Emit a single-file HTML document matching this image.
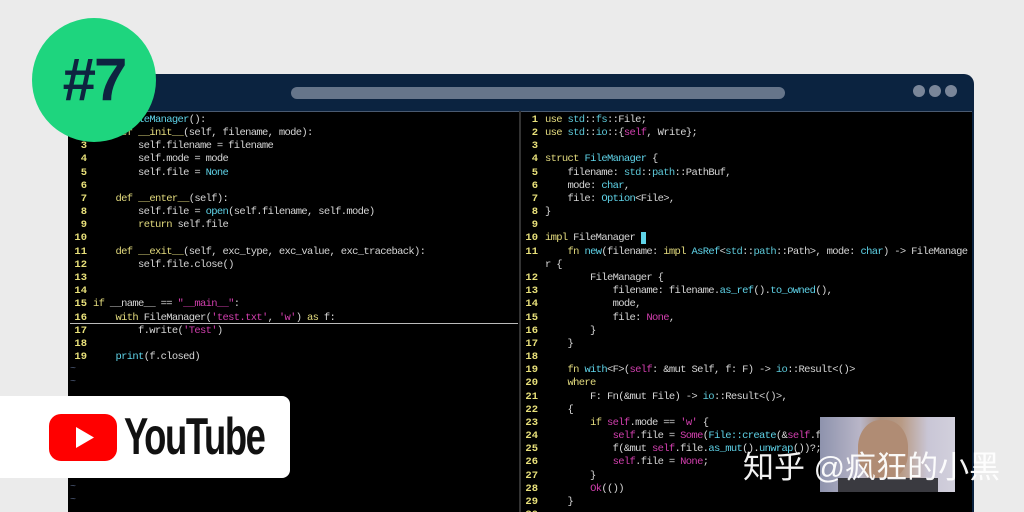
<!DOCTYPE html>
<html style="overflow:hidden"><head><meta charset="utf-8"><style>
html,body{overflow:hidden}
body{margin:0;width:1024px;height:512px;background:#ebebeb;position:relative;overflow:hidden;font-family:"Liberation Sans",sans-serif}
.win{position:absolute;left:68px;top:74px;width:906px;height:438px;background:#0b2340;border-radius:4px 10px 0 0}
.code{position:absolute;top:111px;height:401px;background:#000;border-top:1px solid #4a5a70}
.l{position:absolute;white-space:pre;font-family:"Liberation Mono",monospace;font-size:10.5px;letter-spacing:-0.67px;color:#d6d6d6;line-height:13px;margin-top:2px}
.n{position:absolute;white-space:pre;font-family:"Liberation Mono",monospace;font-size:10.5px;color:#e8e07a;text-align:right;width:30px;line-height:13px;font-weight:bold;margin-top:2px}
.k{color:#e3db7e}.c{color:#5fd3e8}.s{color:#d23fae}.m{color:#d23fae}.t{color:#5cc8d8}
.tl{position:absolute;font-family:"Liberation Mono",monospace;font-size:10px;color:#4c5a78}
</style></head><body>
<div class="win"></div>
<div style="position:absolute;left:291px;top:87px;width:494px;height:12px;border-radius:6px;background:#66758a"></div>
<div style="position:absolute;left:913px;top:85px;width:12px;height:12px;border-radius:6px;background:#7a8699"></div>
<div style="position:absolute;left:929px;top:85px;width:12px;height:12px;border-radius:6px;background:#7a8699"></div>
<div style="position:absolute;left:945px;top:85px;width:12px;height:12px;border-radius:6px;background:#7a8699"></div>
<div class="code" style="left:68px;width:451px"></div>
<div class="code" style="left:521px;width:451px"></div>
<div style="position:absolute;left:519px;top:111px;width:2px;height:401px;background:#333"></div>
<div style="position:absolute;left:70px;top:323px;width:448px;height:1px;background:#bbb"></div>

<!-- left -->
<div class="n" style="left:57px;top:112px">1</div><div class="l" style="left:93px;top:112px"><span class="k">class</span> <span class="c">FileManager</span>():</div>
<div class="n" style="left:57px;top:125px">2</div><div class="l" style="left:93px;top:125px">    <span class="k">def</span> <span class="k">__init__</span>(self, filename, mode):</div>
<div class="n" style="left:57px;top:138px">3</div><div class="l" style="left:93px;top:138px">        self.filename = filename</div>
<div class="n" style="left:57px;top:151px">4</div><div class="l" style="left:93px;top:151px">        self.mode = mode</div>
<div class="n" style="left:57px;top:165px">5</div><div class="l" style="left:93px;top:165px">        self.file = <span class="c">None</span></div>
<div class="n" style="left:57px;top:178px">6</div>
<div class="n" style="left:57px;top:191px">7</div><div class="l" style="left:93px;top:191px">    <span class="k">def</span> <span class="k">__enter__</span>(self):</div>
<div class="n" style="left:57px;top:204px">8</div><div class="l" style="left:93px;top:204px">        self.file = <span class="c">open</span>(self.filename, self.mode)</div>
<div class="n" style="left:57px;top:217px">9</div><div class="l" style="left:93px;top:217px">        <span class="k">return</span> self.file</div>
<div class="n" style="left:57px;top:230px">10</div>
<div class="n" style="left:57px;top:244px">11</div><div class="l" style="left:93px;top:244px">    <span class="k">def</span> <span class="k">__exit__</span>(self, exc_type, exc_value, exc_traceback):</div>
<div class="n" style="left:57px;top:257px">12</div><div class="l" style="left:93px;top:257px">        self.file.close()</div>
<div class="n" style="left:57px;top:270px">13</div>
<div class="n" style="left:57px;top:283px">14</div>
<div class="n" style="left:57px;top:296px">15</div><div class="l" style="left:93px;top:296px"><span class="k">if</span> __name__ == <span class="s">"__main__"</span>:</div>
<div class="n" style="left:57px;top:310px">16</div><div class="l" style="left:93px;top:310px">    <span class="k">with</span> FileManager(<span class="s">'test.txt'</span>, <span class="s">'w'</span>) <span class="k">as</span> f:</div>
<div class="n" style="left:57px;top:323px">17</div><div class="l" style="left:93px;top:323px">        f.write(<span class="s">'Test'</span>)</div>
<div class="n" style="left:57px;top:336px">18</div>
<div class="n" style="left:57px;top:349px">19</div><div class="l" style="left:93px;top:349px">    <span class="c">print</span>(f.closed)</div>
<div class="tl" style="left:70px;top:364px">~</div><div class="tl" style="left:70px;top:377px">~</div>
<div class="tl" style="left:70px;top:482px">~</div><div class="tl" style="left:70px;top:495px">~</div>

<!-- right -->
<div class="n" style="left:508px;top:112px">1</div><div class="l" style="left:545px;top:112px"><span class="k">use</span> <span class="t">std</span>::<span class="t">fs</span>::File;</div>
<div class="n" style="left:508px;top:125px">2</div><div class="l" style="left:545px;top:125px"><span class="k">use</span> <span class="t">std</span>::<span class="t">io</span>::{<span class="m">self</span>, Write};</div>
<div class="n" style="left:508px;top:138px">3</div>
<div class="n" style="left:508px;top:151px">4</div><div class="l" style="left:545px;top:151px"><span class="k">struct</span> <span class="c">FileManager</span> {</div>
<div class="n" style="left:508px;top:165px">5</div><div class="l" style="left:545px;top:165px">    filename: <span class="t">std</span>::<span class="t">path</span>::PathBuf,</div>
<div class="n" style="left:508px;top:178px">6</div><div class="l" style="left:545px;top:178px">    mode: <span class="c">char</span>,</div>
<div class="n" style="left:508px;top:191px">7</div><div class="l" style="left:545px;top:191px">    file: <span class="c">Option</span>&lt;File&gt;,</div>
<div class="n" style="left:508px;top:204px">8</div><div class="l" style="left:545px;top:204px">}</div>
<div class="n" style="left:508px;top:217px">9</div>
<div class="n" style="left:508px;top:230px">10</div><div class="l" style="left:545px;top:230px"><span class="k">impl</span> FileManager <span style="background:#5fd3e8"> </span></div>
<div class="n" style="left:508px;top:244px">11</div><div class="l" style="left:545px;top:244px">    <span class="k">fn</span> <span class="c">new</span>(filename: <span class="k">impl</span> <span class="c">AsRef</span>&lt;<span class="t">std</span>::<span class="t">path</span>::Path&gt;, mode: <span class="c">char</span>) -&gt; FileManage</div>
<div class="l" style="left:545px;top:257px">r {</div>
<div class="n" style="left:508px;top:270px">12</div><div class="l" style="left:545px;top:270px">        FileManager {</div>
<div class="n" style="left:508px;top:283px">13</div><div class="l" style="left:545px;top:283px">            filename: filename.<span class="c">as_ref</span>().<span class="c">to_owned</span>(),</div>
<div class="n" style="left:508px;top:296px">14</div><div class="l" style="left:545px;top:296px">            mode,</div>
<div class="n" style="left:508px;top:310px">15</div><div class="l" style="left:545px;top:310px">            file: <span class="m">None</span>,</div>
<div class="n" style="left:508px;top:323px">16</div><div class="l" style="left:545px;top:323px">        }</div>
<div class="n" style="left:508px;top:336px">17</div><div class="l" style="left:545px;top:336px">    }</div>
<div class="n" style="left:508px;top:349px">18</div>
<div class="n" style="left:508px;top:362px">19</div><div class="l" style="left:545px;top:362px">    <span class="k">fn</span> <span class="c">with</span>&lt;F&gt;(<span class="m">self</span>: &amp;mut Self, f: F) -&gt; <span class="t">io</span>::Result&lt;()&gt;</div>
<div class="n" style="left:508px;top:375px">20</div><div class="l" style="left:545px;top:375px">    <span class="k">where</span></div>
<div class="n" style="left:508px;top:389px">21</div><div class="l" style="left:545px;top:389px">        F: Fn(&amp;mut File) -&gt; <span class="t">io</span>::Result&lt;()&gt;,</div>
<div class="n" style="left:508px;top:402px">22</div><div class="l" style="left:545px;top:402px">    {</div>
<div class="n" style="left:508px;top:415px">23</div><div class="l" style="left:545px;top:415px">        <span class="k">if</span> <span class="m">self</span>.mode == <span class="s">'w'</span> {</div>
<div class="n" style="left:508px;top:428px">24</div><div class="l" style="left:545px;top:428px">            <span class="m">self</span>.file = <span class="m">Some</span>(<span class="c">File::create</span>(&amp;<span class="m">self</span>.f</div>
<div class="n" style="left:508px;top:441px">25</div><div class="l" style="left:545px;top:441px">            f(&amp;mut <span class="m">self</span>.file.<span class="c">as_mut</span>().<span class="c">unwrap</span>())?;</div>
<div class="n" style="left:508px;top:454px">26</div><div class="l" style="left:545px;top:454px">            <span class="m">self</span>.file = <span class="m">None</span>;</div>
<div class="n" style="left:508px;top:468px">27</div><div class="l" style="left:545px;top:468px">        }</div>
<div class="n" style="left:508px;top:481px">28</div><div class="l" style="left:545px;top:481px">        <span class="m">Ok</span>(())</div>
<div class="n" style="left:508px;top:494px">29</div><div class="l" style="left:545px;top:494px">    }</div>
<div class="n" style="left:508px;top:507px">30</div>

<!-- webcam -->
<div style="position:absolute;left:820px;top:417px;width:135px;height:75px;background:linear-gradient(90deg,#8e93ad 0%,#b9b6c8 30%,#a88e7c 45%,#b89a84 60%,#c9c6d6 80%,#d2d0dc 100%)"></div>
<div style="position:absolute;left:858px;top:420px;width:50px;height:60px;border-radius:45%;background:#b08c74"></div>
<div style="position:absolute;left:838px;top:478px;width:100px;height:14px;background:#3a3a40"></div>

<div style="position:absolute;left:743px;top:442px;font-family:'Liberation Sans','Noto Sans CJK SC',sans-serif;font-size:31px;color:#fff;white-space:nowrap;opacity:.95">知乎 @疯狂的小黑</div>

<!-- #7 -->
<div style="position:absolute;left:32px;top:18px;width:124px;height:124px;border-radius:50%;background:#1ed57e"></div>
<div style="position:absolute;left:32px;top:40px;width:124px;text-align:center;font-weight:bold;font-size:60px;line-height:80px;color:#0e2440;letter-spacing:-2px">#7</div>

<!-- YouTube -->
<div style="position:absolute;left:0;top:396px;width:290px;height:82px;background:#fff;border-radius:0 8px 8px 0"></div>
<div style="position:absolute;left:49px;top:414px;width:68px;height:47px;background:#f00;border-radius:12px"></div>
<svg style="position:absolute;left:49px;top:414px" width="68" height="47"><polygon points="27,13 27,34 45,23.5" fill="#fff"/></svg>
<div style="position:absolute;left:124px;top:405px;font-family:'Liberation Sans Narrow','Liberation Sans',sans-serif;font-weight:bold;font-size:52px;line-height:64px;color:#111;letter-spacing:-2px;transform:scaleX(0.70);transform-origin:left;white-space:nowrap">YouTube</div>
</body></html>
